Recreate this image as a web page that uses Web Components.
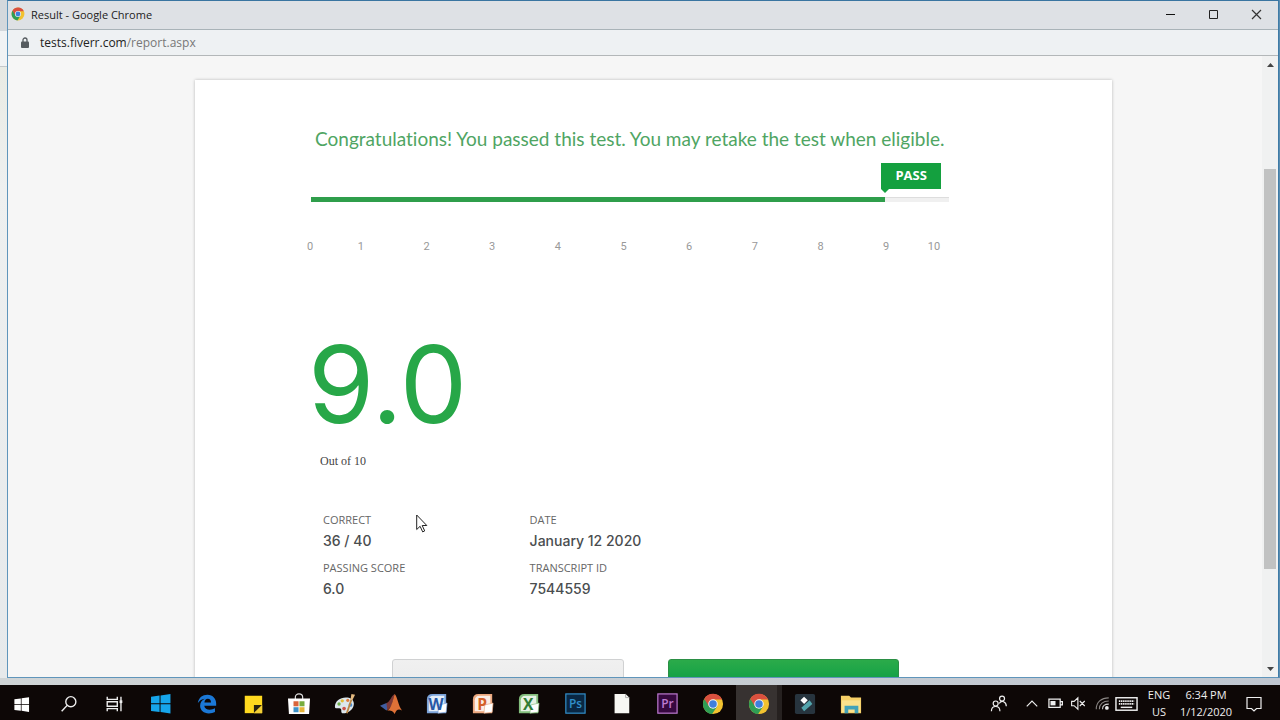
<!DOCTYPE html>
<html lang="en">
<head>
<meta charset="utf-8">
<title>Result - Google Chrome</title>
<style>
    html, body {
        margin: 0;
        height: 100%;
        overflow: hidden;
    }

    body {
        font-family: "Open Sans", "Noto Sans", sans-serif;
    }
</style>
</head>
<body>
<desktop-screen>
    <browser-window caption="Result - Google Chrome" host="tests.fiverr.com" path="/report.aspx">
        <report-card>
            <score-meter value="9" verdict="PASS">Congratulations! You passed this test. You may retake the test when eligible.</score-meter>
            <score-total score="9.0">Out of 10</score-total>
            <result-facts></result-facts>
        </report-card>
    </browser-window>
    <task-bar slot="taskbar"></task-bar>
    <mouse-pointer slot="pointer"></mouse-pointer>
</desktop-screen>

<script>
const chromeLogo = `
    <circle cx="12" cy="12" r="11" fill="#f2c230"/>
    <path d="M12 12L2.5 6.5A11 11 0 0 0 11 23L16.5 14.6z" fill="#2f9e55"/>
    <path d="M2.5 6.5A11 11 0 0 1 22 7.2H12L7.6 14.4z" fill="#d9503f"/>
    <circle cx="12" cy="12" r="5.2" fill="#f4f4f4"/>
    <circle cx="12" cy="12" r="4.1" fill="#3f7fdc"/>`;

class DesktopScreen extends HTMLElement {
    constructor() {
        super();
        this.attachShadow({mode: "open"}).innerHTML = `
            <style>
                :host {
                    display: flex;
                    flex-direction: column;
                    position: relative;
                    height: 100vh;
                    background: linear-gradient(to right, #cfd4d6, #bfc6d0);
                }

                .desk {
                    flex: 1;
                    min-height: 0;
                    display: flex;
                    padding-bottom: 7px;
                    box-sizing: border-box;
                }

                .behind {
                    width: 7px;
                    display: flex;
                    flex-direction: column;
                }

                .behind i:nth-child(1) { height: 31px; background: #d3d8dc; }
                .behind i:nth-child(2) { height: 35px; background: #f1f3f4; border-bottom: 1px solid #c4c8cb; }
                .behind i:nth-child(3) { flex: 1; background: linear-gradient(#e9ebe4, #eef0f0 20%, #e6e9eb); }

                .edge {
                    width: 1px;
                    background: #5b8db0;
                }
            </style>
            <div class="desk">
                <div class="behind"><i></i><i></i><i></i></div>
                <slot></slot>
                <div class="edge"></div>
            </div>
            <slot name="taskbar"></slot>
            <slot name="pointer"></slot>`;
    }
}

class BrowserWindow extends HTMLElement {
    constructor() {
        super();
        this.attachShadow({mode: "open"});
    }

    connectedCallback() {
        this.shadowRoot.innerHTML = `
            <style>
                :host {
                    flex: 1;
                    min-width: 0;
                    display: flex;
                    flex-direction: column;
                    box-sizing: border-box;
                    border: 1px solid #5f95bb;
                    border-top-color: #3a75a1;
                    border-right-color: #3f7ba6;
                    background: #f6f6f6;
                }

                header {
                    display: flex;
                    align-items: center;
                    height: 28px;
                    background: #dee1e5;
                    border-bottom: 1px solid #a9b3b8;
                    font-size: 11px;
                    color: #222;
                }

                header .logo {
                    width: 14px;
                    height: 14px;
                    margin: 0 6px 2px 3px;
                }

                h1 {
                    flex: 1;
                    margin: 0;
                    padding-bottom: 2px;
                    font: inherit;
                }

                header button {
                    width: 43px;
                    height: 28px;
                    padding: 0 0 2px;
                    border: 0;
                    background: none;
                }

                button svg {
                    display: block;
                    margin: auto;
                }

                .address {
                    display: flex;
                    align-items: center;
                    height: 25px;
                    padding-left: 12px;
                    gap: 10px;
                    background: #eef1f3;
                    border-bottom: 1px solid #b3b7b9;
                    font-size: 12px;
                    color: #222;
                }

                .address span { color: #777; }

                .view {
                    flex: 1;
                    min-height: 0;
                    display: flex;
                }

                main {
                    flex: 1;
                    min-width: 0;
                    overflow: hidden;
                    padding: 24px 150px 0 187px;
                }

                .scroll {
                    width: 16px;
                    display: flex;
                    flex-direction: column;
                    align-items: center;
                    background: #f0f1f1;
                }

                .scroll button {
                    width: 16px;
                    height: 17px;
                    padding: 0;
                    border: 0;
                    background: none;
                }

                .track {
                    flex: 1;
                    width: 12px;
                    display: flex;
                    flex-direction: column;
                }

                .track::before { content: ''; flex: 96; }
                .track i { flex: 400; background: #c1c2c2; }
                .track::after { content: ''; flex: 91; }
            </style>
            <header>
                <svg class="logo" viewBox="0 0 24 24">${chromeLogo}</svg>
                <h1>${this.getAttribute("caption")}</h1>
                <button aria-label="Minimize"><svg width="11" height="11"><path d="M1 5.5h9" stroke="#111"/></svg></button>
                <button aria-label="Maximize"><svg width="11" height="11"><path d="M1.5 1.5h8v8h-8z" fill="none" stroke="#222"/></svg></button>
                <button aria-label="Close"><svg width="11" height="11"><path d="M1 1l9 9M10 1l-9 9" stroke="#333" stroke-width="1.2"/></svg></button>
            </header>
            <div class="address">
                <svg width="10" height="12" viewBox="0 0 10 12"><rect x="1" y="4.5" width="8" height="6.5" rx="1" fill="#555b5f"/><path d="M3 5V3a2 2 0 0 1 4 0v2" fill="none" stroke="#555b5f" stroke-width="1.3"/></svg>
                <div>${this.getAttribute("host")}<span>${this.getAttribute("path")}</span></div>
            </div>
            <div class="view">
                <main><slot></slot></main>
                <div class="scroll">
                    <button aria-label="Scroll up"><svg width="7" height="4"><path d="M0 4L3.5 0 7 4z" fill="#444"/></svg></button>
                    <div class="track"><i></i></div>
                    <button aria-label="Scroll down"><svg width="7" height="4"><path d="M0 0h7L3.5 4z" fill="#444"/></svg></button>
                </div>
            </div>`;
    }
}

class ReportCard extends HTMLElement {
    constructor() {
        super();
        this.attachShadow({mode: "open"}).innerHTML = `
            <style>
                :host {
                    display: block;
                    box-sizing: border-box;
                    padding: 47px 163px 40px 116px;
                    background: #fff;
                    box-shadow: 0 0 3px rgba(0, 0, 0, 0.25);
                }

                .actions {
                    display: flex;
                    gap: 44px;
                    margin: 58px 50px 0 81px;
                }

                .actions button {
                    flex: 1;
                    height: 48px;
                    box-sizing: border-box;
                    border: 1px solid #d0d1d2;
                    border-radius: 3px;
                    background: linear-gradient(#f0f0f0, #e9e9e9);
                }

                .actions .primary {
                    border-color: #2b8f45;
                    background: linear-gradient(#2bab4a, #12a046 20px);
                }
            </style>
            <slot></slot>
            <div class="actions">
                <button aria-label="Retake"></button>
                <button class="primary" aria-label="Done"></button>
            </div>`;
    }
}

class ScoreMeter extends HTMLElement {
    constructor() {
        super();
        this.attachShadow({mode: "open"});
    }

    connectedCallback() {
        const marks = Array.from({length: 11}, (_, i) => `<span>${i}</span>`).join("");
        this.shadowRoot.innerHTML = `
            <style>
                :host {
                    display: block;
                    --level: ${this.getAttribute("value") * 10}%;
                }

                p {
                    margin: 0 0 46px 4px;
                    font: 19px/24px Lato, sans-serif;
                    font-variant-ligatures: none;
                    color: #4fa563;
                    white-space: nowrap;
                }

                .track {
                    position: relative;
                    height: 5px;
                    background: linear-gradient(#ddd 20%, #f0f0f0 20%);
                }

                .fill {
                    width: var(--level);
                    height: 5px;
                    background: #2f9e4b;
                }

                .badge {
                    position: absolute;
                    left: calc(var(--level) - 4px);
                    bottom: 13px;
                    width: 60px;
                    padding-bottom: 2px;
                    background: #14a03f;
                    color: #fff;
                    font: bold 13px/24px "Open Sans", sans-serif;
                    text-align: center;
                }

                .badge::after {
                    content: '';
                    position: absolute;
                    top: 100%;
                    left: 0;
                    border: 4px solid transparent;
                    border-top-color: #14a03f;
                }

                .scale {
                    display: grid;
                    grid-template-columns: 36px repeat(9, 1fr) 30px;
                    margin: 37px 0 0 -19px;
                    font: 11px/16px Roboto, sans-serif;
                    color: #999;
                    text-align: center;
                }
            </style>
            <p><slot></slot></p>
            <div class="track">
                <div class="fill"></div>
                <div class="badge">${this.getAttribute("verdict")}</div>
            </div>
            <div class="scale">${marks}</div>`;
    }
}

class ScoreTotal extends HTMLElement {
    constructor() {
        super();
        this.attachShadow({mode: "open"});
    }

    connectedCallback() {
        this.shadowRoot.innerHTML = `
            <style>
                :host {
                    display: block;
                    margin-top: 74px;
                }

                .score {
                    margin-left: -3px;
                    font: 107px/110px Inter, sans-serif;
                    color: #27a748;
                }

                .caption {
                    margin: 14px 0 0 9px;
                    font: 12px/16px "Liberation Serif", serif;
                    color: #444;
                }
            </style>
            <div class="score">${this.getAttribute("score")}</div>
            <div class="caption"><slot></slot></div>`;
    }
}

class ResultFacts extends HTMLElement {
    constructor() {
        super();
        const facts = [
            ["CORRECT", "36 / 40"],
            ["DATE", "January 12 2020"],
            ["PASSING SCORE", "6.0"],
            ["TRANSCRIPT ID", "7544559"]
        ];
        this.attachShadow({mode: "open"}).innerHTML = `
            <style>
                :host {
                    display: block;
                    margin: 42px 0 0 12px;
                }

                dl {
                    display: grid;
                    grid-template-columns: 33% 1fr;
                    row-gap: 6px;
                    margin: 0;
                }

                dt {
                    font: 11px/18px "Open Sans", sans-serif;
                    color: #666;
                }

                dd {
                    margin: 0;
                    font: 500 14px/24px Inter, sans-serif;
                    color: #4a4d4f;
                }
            </style>
            <dl>${facts.map(([name, value]) => `<div><dt>${name}</dt><dd>${value}</dd></div>`).join("")}</dl>`;
    }
}

const windowsLogo = color => `<path d="M2 4.800l8.800-1.200v8H2zM11.800 3.500L22 2v9.600H11.800zM2 12.600h8.800v8L2 19.400zM11.800 12.600H22V22l-10.200-1.400z" fill="${color}"/>`;

const officeIcon = (letter, dark, light) => `
    <path d="M1 7c0-4 2-6 6-6h15v21H1z" fill="${light}"/>
    <path d="M3 8c0-3 2-5 5-5h12v17H3z" fill="#fff" opacity="0.8"/>
    <path d="M14 13l9-2-1 10-9 1z" fill="#fff" stroke="${light}" stroke-width="0.7"/>
    <text x="11" y="18" text-anchor="middle" font-family="Open Sans, sans-serif" font-weight="bold" font-size="17" fill="${dark}">${letter}</text>`;

const adobeIcon = (letters, line, fill) => `
    <rect x="2" y="1" width="21" height="21" fill="${fill}" stroke="${line}" stroke-width="1.3"/>
    <text x="12.5" y="16" text-anchor="middle" font-family="Open Sans, sans-serif" font-weight="600" font-size="13" fill="${line}">${letters}</text>`;

const apps = [
    ["Start", `<g transform="translate(1 3) scale(0.8)">${windowsLogo("#fff")}</g>`],
    ["Search", `<circle cx="14" cy="9.5" r="5.5" fill="none" stroke="#eee" stroke-width="1.5"/><path d="M10 13.500L4 20" stroke="#eee" stroke-width="1.6"/>`],
    ["Task View", `<path d="M3.500 4v3h11V4M3.500 20v-3h11v3M3.500 9.500h11v5h-11zM18.500 4v16" fill="none" stroke="#eee" stroke-width="1.5"/><path d="M17 8h3v3h-3z" fill="#eee"/>`],
    ["Windows", `<g transform="translate(-1 -1) scale(1.06)">${windowsLogo("#16a5ea")}</g>`],
    ["Edge", `<path d="M2 11C3 5 7 2 12.500 2 18.500 2 22 6.500 22 11.500V14H9c.3 3 3 4.200 6 4.200 2.200 0 4-.6 5.700-1.600v4.200C19 21.800 16.600 22.300 14 22.300 8.500 22.300 4.500 19 4.500 14c0-3.500 2-6.300 5-7.600C6.500 6.700 3.700 8.500 2 11zM9.200 10.300h7.200c0-2.500-1.200-4.100-3.500-4.100-2.100 0-3.500 1.800-3.700 4.100z" fill="#1b78d6"/>`],
    ["Sticky Notes", `<path d="M3 3h19v19H3z" fill="#ffd91f"/><path d="M13 13h9l-9 9z" fill="#2a2410"/><path d="M22 13v9h-9z" fill="#f3cf35"/>`],
    ["Store", `<path d="M8 7V4.500C8 2.500 9.500 1 12 1s4 1.500 4 3.500V7" fill="none" stroke="#ddd" stroke-width="1.3"/><path d="M0 6h24l-1 17H1z" fill="#fff"/><path d="M6 9h5.500v5.500H6z" fill="#d9653b"/><path d="M12.500 9H18v5.500h-5.500z" fill="#77ad3d"/><path d="M6 15.500h5.500V21H6z" fill="#3d92c8"/><path d="M12.500 15.500H18V21h-5.500z" fill="#e6b53a"/>`],
    ["Paint", `<path d="M1 15C1 8 8 4 15 5c6 1 8 6 6 10-2 5-8 8-12 7-2-1 0-4-2-5-3-1-6 1-6-2z" fill="#dde7ec"/><circle cx="5.500" cy="12" r="1.800" fill="#6fae4a"/><circle cx="9" cy="8.500" r="1.800" fill="#e3bd35"/><circle cx="15" cy="8" r="1.700" fill="#df7b3e"/><circle cx="18" cy="13" r="2" fill="#4a8bd0"/><circle cx="11" cy="17" r="2" fill="#cc544c"/><path d="M14 22l5-15" stroke="#bd8745" stroke-width="2"/><path d="M18 7l1-6 4 1-3 6z" fill="#e3b87e"/>`],
    ["MATLAB", `<path d="M0 14l7-3 5 3-5 5z" fill="#405da1"/><path d="M7 11c4-1 5-8 9-10l-3 12-5 6z" fill="#7d3838"/><path d="M16 1c3 3 4 13 8 18-4-2-6-1-8 4-2-4-4-4-8-4 5-3 6-12 8-18z" fill="#df7137"/>`],
    ["Word", officeIcon("W", "#2758a6", "#7ba3d9")],
    ["PowerPoint", officeIcon("P", "#d46029", "#eba77e")],
    ["Excel", officeIcon("X", "#317d35", "#83bd7c")],
    ["Photoshop", adobeIcon("Ps", "#328fca", "#092743")],
    ["Notepad", `<path d="M5 1h12l4 4v17H5z" fill="#f7f7f3"/><path d="M17 1v4h4" fill="none" stroke="#aaa"/>`],
    ["Premiere Pro", adobeIcon("Pr", "#bd7bd0", "#36083f")],
    ["Chrome", chromeLogo],
    ["Chrome", chromeLogo, "active"],
    ["Filmora", `<rect x="1" y="1" width="22" height="22" rx="2" fill="#27343e"/><path d="M7 8l4-4 4 4-4 4z" fill="#fff"/><path d="M8 16l9-8 3 4-9 8z" fill="#53a5ad"/>`],
    ["File Explorer", `<path d="M1 3h9l2 2h11v17H1z" fill="#f5cf67"/><path d="M2 8h20v13H2z" fill="#fbe18c"/><path d="M5 22v-8h15v8h-4v-4H9v4z" fill="#42a2b9"/>`]
];

const tray = [
    ["People", 44, 17, `<g fill="none" stroke="#eee" stroke-width="1.7"><circle cx="8" cy="12" r="3.500"/><path d="M2 23c0-9 12-9 12 0"/><circle cx="17" cy="5" r="3.500"/><path d="M13 12c3-5 10-3 10 4"/></g>`],
    ["Hidden icons", 24, 14, `<path d="M3 16l9-9 9 9" fill="none" stroke="#eee" stroke-width="2"/>`],
    ["Battery", 22, 15, `<path d="M1.500 5h18v13h-18zM20 9h3v5h-3" fill="none" stroke="#eee" stroke-width="2"/><path d="M4 8h8v7H4z" fill="#eee"/>`],
    ["Volume", 24, 15, `<path d="M1 8.500h4L11 3v18l-6-5.500H1zM14 8l8 8M22 8l-8 8" fill="none" stroke="#eee" stroke-width="1.800"/>`],
    ["Network", 24, 15, `<g fill="none" stroke="#8b8785" stroke-width="1.700"><path d="M2 21C2 10 10 3 22 3"/><path d="M7 21c0-8 6-13 15-13"/><path d="M12 21c0-5 4-8 10-8" stroke="#ccc"/></g><circle cx="19" cy="19" r="3" fill="#eee"/>`],
    ["Keyboard", 24, 23, `<rect x="1" y="6" width="22" height="13" fill="none" stroke="#eee" stroke-width="1.500"/><path d="M4 9.500h16M4 12.500h16" stroke="#eee" stroke-width="1.800" stroke-dasharray="1.600 0.600"/><path d="M6 16h12" stroke="#eee" stroke-width="1.500"/>`]
];

class TaskBar extends HTMLElement {
    constructor() {
        super();
        this.attachShadow({mode: "open"}).innerHTML = `
            <style>
                :host {
                    display: flex;
                    justify-content: space-between;
                    height: 35px;
                    background: #0d0706;
                    color: #eee;
                    font-size: 11px;
                    line-height: 17px;
                }

                nav, .tray {
                    display: flex;
                }

                .tray { padding-right: 4px; }

                button {
                    display: flex;
                    align-items: center;
                    justify-content: center;
                    padding: 2px 0 0;
                    border: 0;
                    background: none;
                    color: inherit;
                    font: inherit;
                    text-align: center;
                    white-space: nowrap;
                }

                nav button { width: 46px; }
                nav svg { width: 22px; height: 22px; }

                .active {
                    background: linear-gradient(to right, #373231 41px, #262120 41px);
                }

                .text { padding: 0; }
                .lang { width: 42px; }
                .clock { width: 52px; }
                .notice { width: 44px; }
            </style>
            <nav>${apps.map(([name, art, state = ""]) => `
                <button class="${state}" aria-label="${name}"><svg viewBox="0 0 24 24">${art}</svg></button>`).join("")}
            </nav>
            <div class="tray">${tray.map(([name, width, size, art]) => `
                <button style="width: ${width}px" aria-label="${name}"><svg width="${size}" height="${size}" viewBox="0 0 24 24">${art}</svg></button>`).join("")}
                <button class="text lang">ENG<br>US</button>
                <button class="text clock">6:34 PM<br>1/12/2020</button>
                <button class="notice" aria-label="Notifications"><svg width="18" height="18"><path d="M2 2.500h14v11h-4.500L9 16l-2.500-2.500H2z" fill="none" stroke="#eee" stroke-width="1.200"/></svg></button>
            </div>`;
    }
}

class MousePointer extends HTMLElement {
    constructor() {
        super();
        this.attachShadow({mode: "open"}).innerHTML = `
            <style>
                :host {
                    display: block;
                    position: absolute;
                    left: 416px;
                    top: 514px;
                    pointer-events: none;
                }
            </style>
            <svg width="12" height="20" viewBox="0 0 12 20"><path d="M.7 1v14.500l3.400-3.200 2.600 5.600 2-1-2.500-5.400h4.600z" fill="#fff" stroke="#222"/></svg>`;
    }
}

customElements.define("desktop-screen", DesktopScreen);
customElements.define("browser-window", BrowserWindow);
customElements.define("report-card", ReportCard);
customElements.define("score-meter", ScoreMeter);
customElements.define("score-total", ScoreTotal);
customElements.define("result-facts", ResultFacts);
customElements.define("task-bar", TaskBar);
customElements.define("mouse-pointer", MousePointer);
</script>
</body>
</html>
